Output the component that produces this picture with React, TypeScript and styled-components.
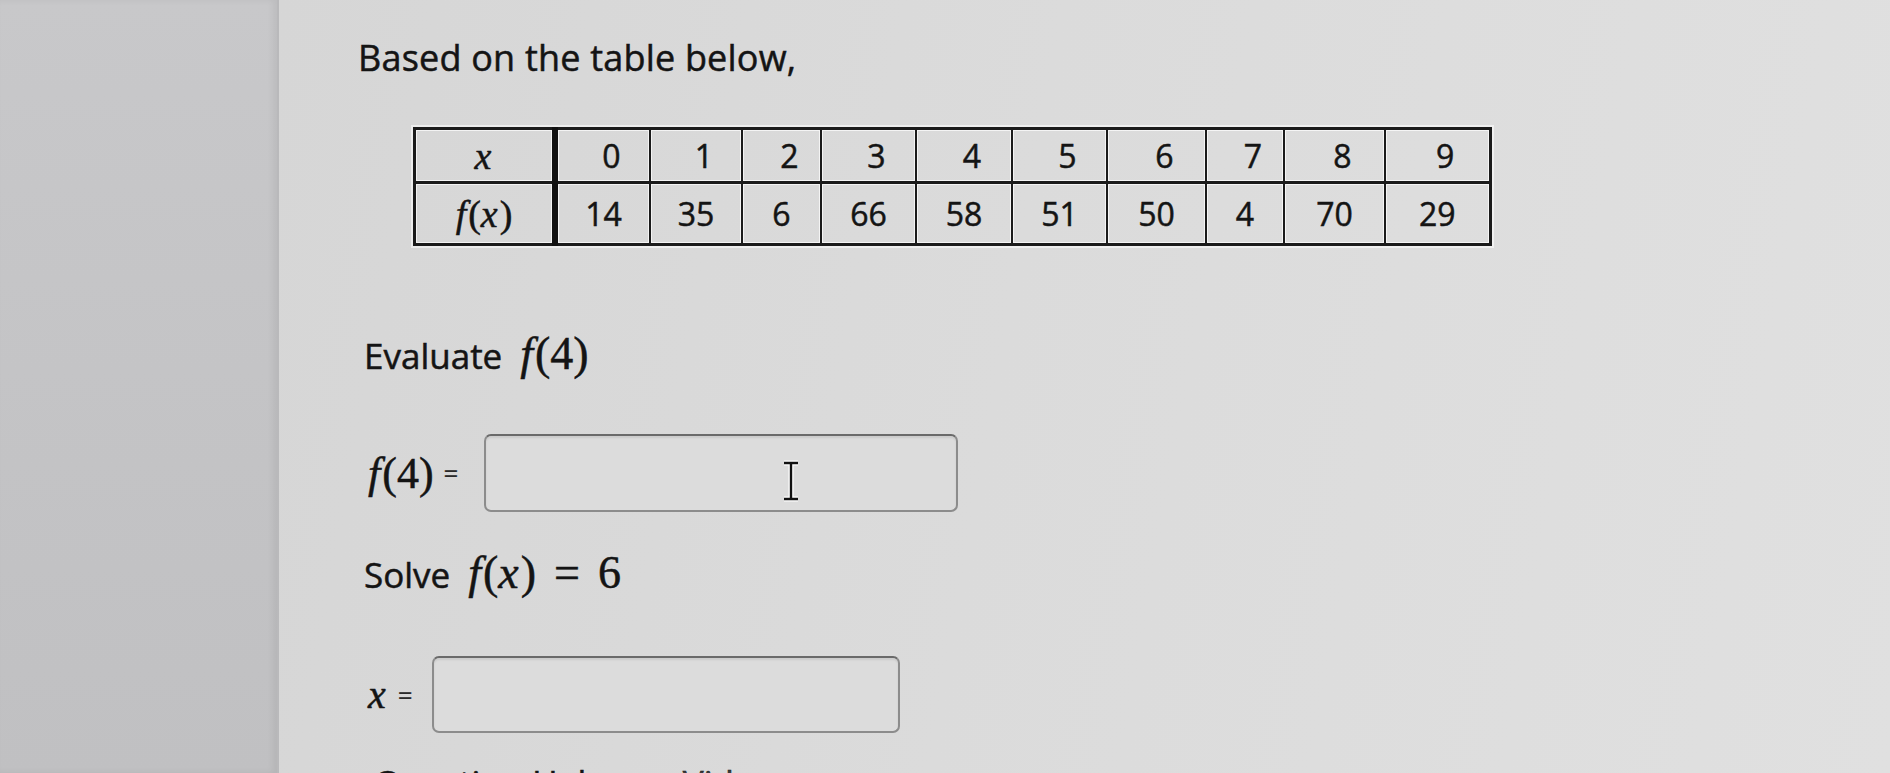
import React from "react";
import styled, { createGlobalStyle } from "styled-components";

const GlobalStyle = createGlobalStyle`
  html, body {
    margin: 0;
    padding: 0;
    overflow: hidden;
  }
  body {
    font-family: "Open Sans", "Liberation Sans", sans-serif;
    color: #141414;
    -webkit-text-stroke: 0.5px #141414;
  }
`;

const Page = styled.div`
  display: flex;
  width: 1890px;
  height: 773px;
  overflow: hidden;
`;

const Sidebar = styled.div`
  width: 277px;
  flex-shrink: 0;
  background: linear-gradient(180deg, #c8c8ca 0%, #c3c3c5 60%, #c0c0c2 100%);
  border-right: 2px solid #b9b9bb;
  box-shadow: inset -4px 0 6px rgba(0, 0, 0, 0.06);
`;

const Main = styled.div`
  flex: 1;
  padding: 36px 0 0 79px;
  background: linear-gradient(100deg, #d6d6d6 0%, #dbdbdb 45%, #e0e0e0 100%);
`;

const Prompt = styled.p`
  margin: 0;
  font-size: 36px;
  line-height: 44px;
  letter-spacing: 0.2px;
`;

const Table = styled.table`
  margin: 47px 0 0 55px;
  border-collapse: collapse;
  border: 3px solid #1b1b1b;
  box-shadow: 0 0 0 2px rgba(255, 255, 255, 0.55);
  font-size: 32px;
`;

const Row = styled.tr<{ $h: number }>`
  height: ${(p) => p.$h}px;
`;

const HeadCell = styled.td<{ $bottom?: boolean }>`
  width: 136px;
  padding: 0;
  text-align: center;
  vertical-align: middle;
  border: 2px solid #1b1b1b;
  border-right: 6px solid #111;
  border-bottom-width: ${(p) => (p.$bottom ? 3 : 2)}px;
  box-shadow: inset 0 0 0 1px rgba(255, 255, 255, 0.7);
`;

const Cell = styled.td<{ $w: number; $top?: boolean }>`
  width: ${(p) => p.$w}px;
  padding: 0 0 0 ${(p) => (p.$top ? 16 : 0)}px;
  box-sizing: border-box;
  text-align: center;
  vertical-align: middle;
  border: 2px solid #1b1b1b;
  border-bottom-width: ${(p) => (p.$top ? 3 : 2)}px;
  box-shadow: inset 0 0 0 1px rgba(255, 255, 255, 0.7);
`;

const MathVar = styled.span<{ $size?: number }>`
  font-family: "Liberation Serif", "DejaVu Serif", serif;
  font-style: italic;
  font-size: ${(p) => p.$size ?? 44}px;
  padding-right: 2px;
`;

const MathNum = styled.span<{ $size?: number }>`
  font-family: "Liberation Serif", "DejaVu Serif", serif;
  font-style: normal;
  font-size: ${(p) => p.$size ?? 44}px;
`;

const MathOp = styled.span`
  font-family: "Liberation Serif", "DejaVu Serif", serif;
  font-size: 46px;
  margin: 0 18px;
`;

const Question = styled.div`
  padding-left: 6px;
`;

const QuestionLine = styled.p<{ $top: number }>`
  margin: ${(p) => p.$top}px 0 0;
  font-size: 35px;
  line-height: 44px;
  display: flex;
  align-items: baseline;
  gap: 18px;
`;

const AnswerRow = styled.div<{ $top: number }>`
  display: flex;
  align-items: center;
  margin: ${(p) => p.$top}px 0 0 4px;
`;

const Label = styled.div<{ $w: number }>`
  width: ${(p) => p.$w}px;
  display: flex;
  align-items: center;
  gap: 10px;
`;

const Equals = styled.span`
  font-size: 26px;
  color: #2a2a2a;
  -webkit-text-stroke: 0.2px #2a2a2a;
`;

const InputWrap = styled.div`
  position: relative;
`;

const AnswerInput = styled.input<{ $w: number; $h: number }>`
  display: block;
  box-sizing: border-box;
  width: ${(p) => p.$w}px;
  height: ${(p) => p.$h}px;
  border: 2px solid #8c8c8c;
  border-top-color: #6a6a6a;
  border-radius: 7px;
  background: #dcdcdc;
  box-shadow: inset 0 2px 2px rgba(0, 0, 0, 0.08);
  outline: none;
`;

const Cursor = styled.svg`
  position: absolute;
  left: 296px;
  top: 26px;
`;

const HelpLine = styled.div`
  margin: 27px 0 0 10px;
  display: flex;
  align-items: center;
  gap: 18px;
  font-size: 35px;
  line-height: 44px;
`;

const HelpIcon = styled.span`
  width: 30px;
  height: 26px;
  border: 3px solid #2b2b2b;
  border-radius: 3px;
  margin-top: 14px;
`;

const HelpLink = styled.span`
  color: #3a3a3a;
  margin-left: -6px;
`;

const columns = [
  { x: 0, fx: 14, w: 95 },
  { x: 1, fx: 35, w: 92 },
  { x: 2, fx: 6, w: 79 },
  { x: 3, fx: 66, w: 95 },
  { x: 4, fx: 58, w: 96 },
  { x: 5, fx: 51, w: 95 },
  { x: 6, fx: 50, w: 99 },
  { x: 7, fx: 4, w: 78 },
  { x: 8, fx: 70, w: 101 },
  { x: 9, fx: 29, w: 105 },
];

const IBeam = () => (
  <Cursor width="22" height="42" viewBox="0 0 22 42">
    <path
      d="M4 3h14M11 3v36M4 39h14"
      stroke="#fff"
      strokeWidth="5"
      fill="none"
    />
    <path
      d="M4 3h14M11 3v36M4 39h14"
      stroke="#111"
      strokeWidth="2.4"
      fill="none"
    />
  </Cursor>
);

const App = (): JSX.Element => {
  return (
    <Page>
      <GlobalStyle />
      <Sidebar />
      <Main>
        <Prompt>Based on the table below,</Prompt>

        <Table>
          <tbody>
            <Row $h={54}>
              <HeadCell $bottom>
                <MathVar $size={38}>x</MathVar>
              </HeadCell>
              {columns.map((c) => (
                <Cell key={c.x} $w={c.w} $top>
                  {c.x}
                </Cell>
              ))}
            </Row>
            <Row $h={62}>
              <HeadCell>
                <MathVar $size={38}>f</MathVar>
                <MathNum $size={38}>(</MathNum>
                <MathVar $size={38}>x</MathVar>
                <MathNum $size={38}>)</MathNum>
              </HeadCell>
              {columns.map((c) => (
                <Cell key={c.x} $w={c.w}>
                  {c.fx}
                </Cell>
              ))}
            </Row>
          </tbody>
        </Table>

        <Question>
          <QuestionLine $top={86}>
            Evaluate
            <span>
              <MathVar $size={46}>f</MathVar>
              <MathNum $size={46}>(4)</MathNum>
            </span>
          </QuestionLine>

          <AnswerRow $top={56}>
            <Label $w={116}>
              <span>
                <MathVar>f</MathVar>
                <MathNum>(4)</MathNum>
              </span>
              <Equals>=</Equals>
            </Label>
            <InputWrap>
              <AnswerInput type="text" $w={474} $h={78} />
              <IBeam />
            </InputWrap>
          </AnswerRow>

          <QuestionLine $top={39}>
            Solve
            <span>
              <MathVar $size={46}>f</MathVar>
              <MathNum $size={46}>(</MathNum>
              <MathVar $size={46}>x</MathVar>
              <MathNum $size={46}>)</MathNum>
              <MathOp>=</MathOp>
              <MathNum $size={46}>6</MathNum>
            </span>
          </QuestionLine>

          <AnswerRow $top={59}>
            <Label $w={64}>
              <MathVar $size={40}>x</MathVar>
              <Equals>=</Equals>
            </Label>
            <InputWrap>
              <AnswerInput type="text" $w={468} $h={77} />
            </InputWrap>
          </AnswerRow>

          <HelpLine>
            Question Help:
            <HelpIcon />
            <HelpLink>Video</HelpLink>
          </HelpLine>
        </Question>
      </Main>
    </Page>
  );
};

export default App;
